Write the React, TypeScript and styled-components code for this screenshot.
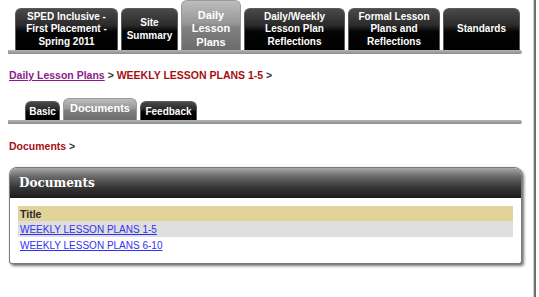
import React from "react";
import styled, { createGlobalStyle } from "styled-components";

const GlobalStyle = createGlobalStyle`
  html, body {
    margin: 0;
    padding: 0;
    background: #ffffff;
    font-family: "Liberation Sans", Arial, sans-serif;
  }
`;

const Page = styled.div`
  display: flex;
  height: 297px;
  overflow: hidden;
`;

const Main = styled.div`
  width: 524px;
  padding-left: 8px;
  flex-shrink: 0;
`;

const Divider = styled.div`
  width: 2px;
  margin-left: 1px;
  border-left: 1px solid #d4d4d4;
  background: #6f6f6f;
`;

const TabsRow = styled.div<{ indent: number; height: number }>`
  display: flex;
  align-items: flex-end;
  gap: 3px;
  padding-left: ${props => props.indent}px;
  height: ${props => props.height}px;
`;

const Tab = styled.div<{ width: number; selected?: boolean; tall: number }>`
  box-sizing: border-box;
  width: ${props => props.width}px;
  height: ${props => props.tall}px;
  display: flex;
  flex-direction: column;
  align-items: center;
  justify-content: center;
  text-align: center;
  color: #ffffff;
  font-weight: bold;
  border: 1px solid ${props => (props.selected ? "#9a9a9a" : "#5a5a5a")};
  border-bottom: none;
  border-radius: 6px 6px 0 0;
  background: ${props =>
    props.selected
      ? "linear-gradient(#bdbdbd 0%, #979797 45%, #808080 55%, #6c6c6c 100%)"
      : "linear-gradient(#4a4a4a 0%, #2a2a2a 40%, #050505 55%, #000000 100%)"};
`;

const TopTab = styled(Tab)`
  font-size: ${props => (props.selected ? 11 : 10)}px;
  line-height: ${props => (props.selected ? 13.5 : 12.5)}px;
  justify-content: ${props => (props.selected ? "flex-end" : "center")};
  padding-bottom: ${props => (props.selected ? 1 : 0)}px;
`;

const SubTab = styled(Tab)`
  font-size: ${props => (props.selected ? 11 : 10)}px;
  line-height: 12px;
  justify-content: ${props => (props.selected ? "flex-start" : "center")};
  padding-top: ${props => (props.selected ? 3 : 2)}px;
`;

const Bar = styled.div`
  width: 514px;
  height: 4px;
  border-radius: 0 2px 2px 0;
  background: linear-gradient(#b4b4b4, #8c8c8c);
`;

const Crumbs = styled.div<{ top: number }>`
  margin-top: ${props => props.top}px;
  font-size: 10.5px;
  line-height: 12px;
  font-weight: bold;
  color: #333333;
  padding-left: 1px;
`;

const CrumbLink = styled.a`
  color: #8b1a8b;
  text-decoration: underline;
`;

const CrumbCurrent = styled.span`
  color: #a50f12;
`;

const SubNav = styled.div`
  margin-top: 17px;
`;

const Panel = styled.div`
  box-sizing: border-box;
  width: 513px;
  margin-top: 15px;
  margin-left: 1px;
  border: 1px solid #7a7a7a;
  border-radius: 8px 8px 3px 3px;
  background: #ffffff;
  box-shadow: 2px 2px 3px rgba(0, 0, 0, 0.55), 0 0 1px rgba(0, 0, 0, 0.3);
  overflow: hidden;
`;

const PanelHeader = styled.div`
  height: 30px;
  display: flex;
  align-items: center;
  padding-left: 9px;
  color: #ffffff;
  font-family: "DejaVu Serif", Georgia, serif;
  font-weight: bold;
  font-size: 12px;
  background: linear-gradient(#a8a8a8 0%, #666666 30%, #363636 65%, #1b1b1b 100%);
`;

const PanelBody = styled.div`
  padding: 8px 8px 10px 8px;
`;

const Table = styled.div`
  display: flex;
  flex-direction: column;
  font-size: 10px;
`;

const Row = styled.div<{ tone: "head" | "alt" | "plain" }>`
  height: ${props => (props.tone === "head" ? 15 : 16)}px;
  display: flex;
  align-items: center;
  padding-left: 2px;
  font-weight: ${props => (props.tone === "head" ? "bold" : "normal")};
  font-size: ${props => (props.tone === "head" ? 10.5 : 10)}px;
  color: #2b2b2b;
  background: ${props =>
    props.tone === "head" ? "#e0d49b" : props.tone === "alt" ? "#dedede" : "#ffffff"};
`;

const DocLink = styled.a`
  color: #3131f2;
  text-decoration: underline;
`;

const topTabs = [
  { width: 103, lines: ["SPED Inclusive -", "First Placement -", "Spring 2011"] },
  { width: 57, lines: ["Site", "Summary"] },
  { width: 60, lines: ["Daily", "Lesson", "Plans"], selected: true },
  { width: 101, lines: ["Daily/Weekly", "Lesson Plan", "Reflections"] },
  { width: 92, lines: ["Formal Lesson", "Plans and", "Reflections"] },
  { width: 77, lines: ["Standards"] },
];

const subTabs = [
  { width: 35, label: "Basic" },
  { width: 74, label: "Documents", selected: true },
  { width: 57, label: "Feedback" },
];

const documents = ["WEEKLY LESSON PLANS 1-5", "WEEKLY LESSON PLANS 6-10"];

export default function App() {
  return (
    <>
      <GlobalStyle />
      <Page>
        <Main>
          <TabsRow indent={7} height={50}>
            {topTabs.map(tab => (
              <TopTab
                key={tab.lines.join(" ")}
                width={tab.width}
                tall={tab.selected ? 50 : 42}
                selected={tab.selected}
              >
                {tab.lines.map(line => (
                  <div key={line}>{line}</div>
                ))}
              </TopTab>
            ))}
          </TabsRow>
          <Bar />

          <Crumbs top={15}>
            <CrumbLink href="#">Daily Lesson Plans</CrumbLink> &gt;{" "}
            <CrumbCurrent>WEEKLY LESSON PLANS 1-5</CrumbCurrent> &gt;
          </Crumbs>

          <SubNav>
            <TabsRow indent={17} height={22}>
              {subTabs.map(tab => (
                <SubTab
                  key={tab.label}
                  width={tab.width}
                  tall={tab.selected ? 22 : 19}
                  selected={tab.selected}
                >
                  {tab.label}
                </SubTab>
              ))}
            </TabsRow>
            <Bar />
          </SubNav>

          <Crumbs top={16}>
            <CrumbCurrent>Documents</CrumbCurrent> &gt;
          </Crumbs>

          <Panel>
            <PanelHeader>Documents</PanelHeader>
            <PanelBody>
              <Table>
                <Row tone="head">Title</Row>
                {documents.map((doc, i) => (
                  <Row key={doc} tone={i % 2 === 0 ? "alt" : "plain"}>
                    <DocLink href="#">{doc}</DocLink>
                  </Row>
                ))}
              </Table>
            </PanelBody>
          </Panel>
        </Main>
        <Divider />
      </Page>
    </>
  );
}
